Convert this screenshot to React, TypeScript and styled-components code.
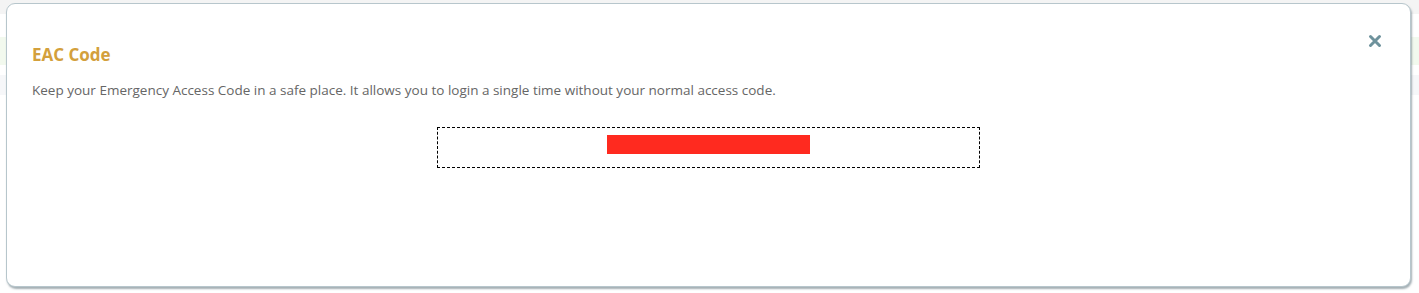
import React from "react";
import styled, { createGlobalStyle } from "styled-components";

const Global = createGlobalStyle`
  html, body { margin: 0; padding: 0; background: #ffffff; }
  body { font-family: "Open Sans", "Liberation Sans", sans-serif; overflow: hidden; }
  #root { width: 1419px; height: 293px; }
`;

const Page = styled.div`
  position: relative;
  width: 1419px;
  height: 293px;
  background: #ffffff;
  overflow: hidden;
`;

const Band = styled.div<{ $bg: string; $h: number; $mt: number }>`
  margin-top: ${(p) => p.$mt}px;
  height: ${(p) => p.$h}px;
  background: ${(p) => p.$bg};
`;

const Backdrop = styled.div`
  position: absolute;
  inset: 0;
  background: rgba(255, 255, 255, 0.55);
`;

const Modal = styled.div`
  position: absolute;
  top: 3px;
  left: 6px;
  width: 1405px;
  height: 284px;
  box-sizing: border-box;
  background: #ffffff;
  border: 1px solid #b7c6cc;
  border-radius: 9px;
  box-shadow: 1px 2px 2px rgba(90, 110, 118, 0.55);
  padding: 40px 25px 0 25px;
`;

const Header = styled.div`
  display: flex;
  align-items: flex-start;
  justify-content: space-between;
`;

const Title = styled.h2`
  margin: 0;
  font-family: "Open Sans", "Liberation Sans", sans-serif;
  font-size: 17px;
  font-weight: 700;
  color: #d3a03c;
  line-height: 22px;
`;

const Close = styled.button`
  border: 0;
  background: none;
  padding: 0;
  margin: -10px 3px 0 0;
  width: 14px;
  height: 14px;
  cursor: pointer;
  display: flex;
  color: #6e929c;
`;

const Text = styled.p`
  margin: 15px 0 0 0;
  font-size: 13.5px;
  line-height: 18px;
  color: #666666;
`;

const CodeBox = styled.div`
  margin: 28px auto 0 auto;
  width: 543px;
  height: 41px;
  box-sizing: border-box;
  border: 1px dashed #000000;
  display: flex;
  justify-content: center;
  align-items: flex-start;
  padding-top: 7px;
`;

const Redact = styled.div`
  width: 203px;
  height: 19px;
  background: #ff2a1f;
`;

export default function App() {
  return (
    <>
      <Global />
      <Page>
        <Band $bg="#e6e6e6" $h={14} $mt={0} />
        <Band $bg="#e3f1da" $h={28} $mt={23} />
        <Band $bg="#eaeef2" $h={20} $mt={10} />
        <Backdrop />
        <Modal>
          <Header>
            <Title>EAC Code</Title>
            <Close aria-label="Close">
              <svg width="14" height="14" viewBox="0 0 14 14">
                <path d="M2.5 2.5 L11.5 11.5 M11.5 2.5 L2.5 11.5" stroke="currentColor" strokeWidth="3" strokeLinecap="round" />
              </svg>
            </Close>
          </Header>
          <Text>
            Keep your Emergency Access Code in a safe place. It allows you to login a single time without your normal access code.
          </Text>
          <CodeBox>
            <Redact />
          </CodeBox>
        </Modal>
      </Page>
    </>
  );
}
